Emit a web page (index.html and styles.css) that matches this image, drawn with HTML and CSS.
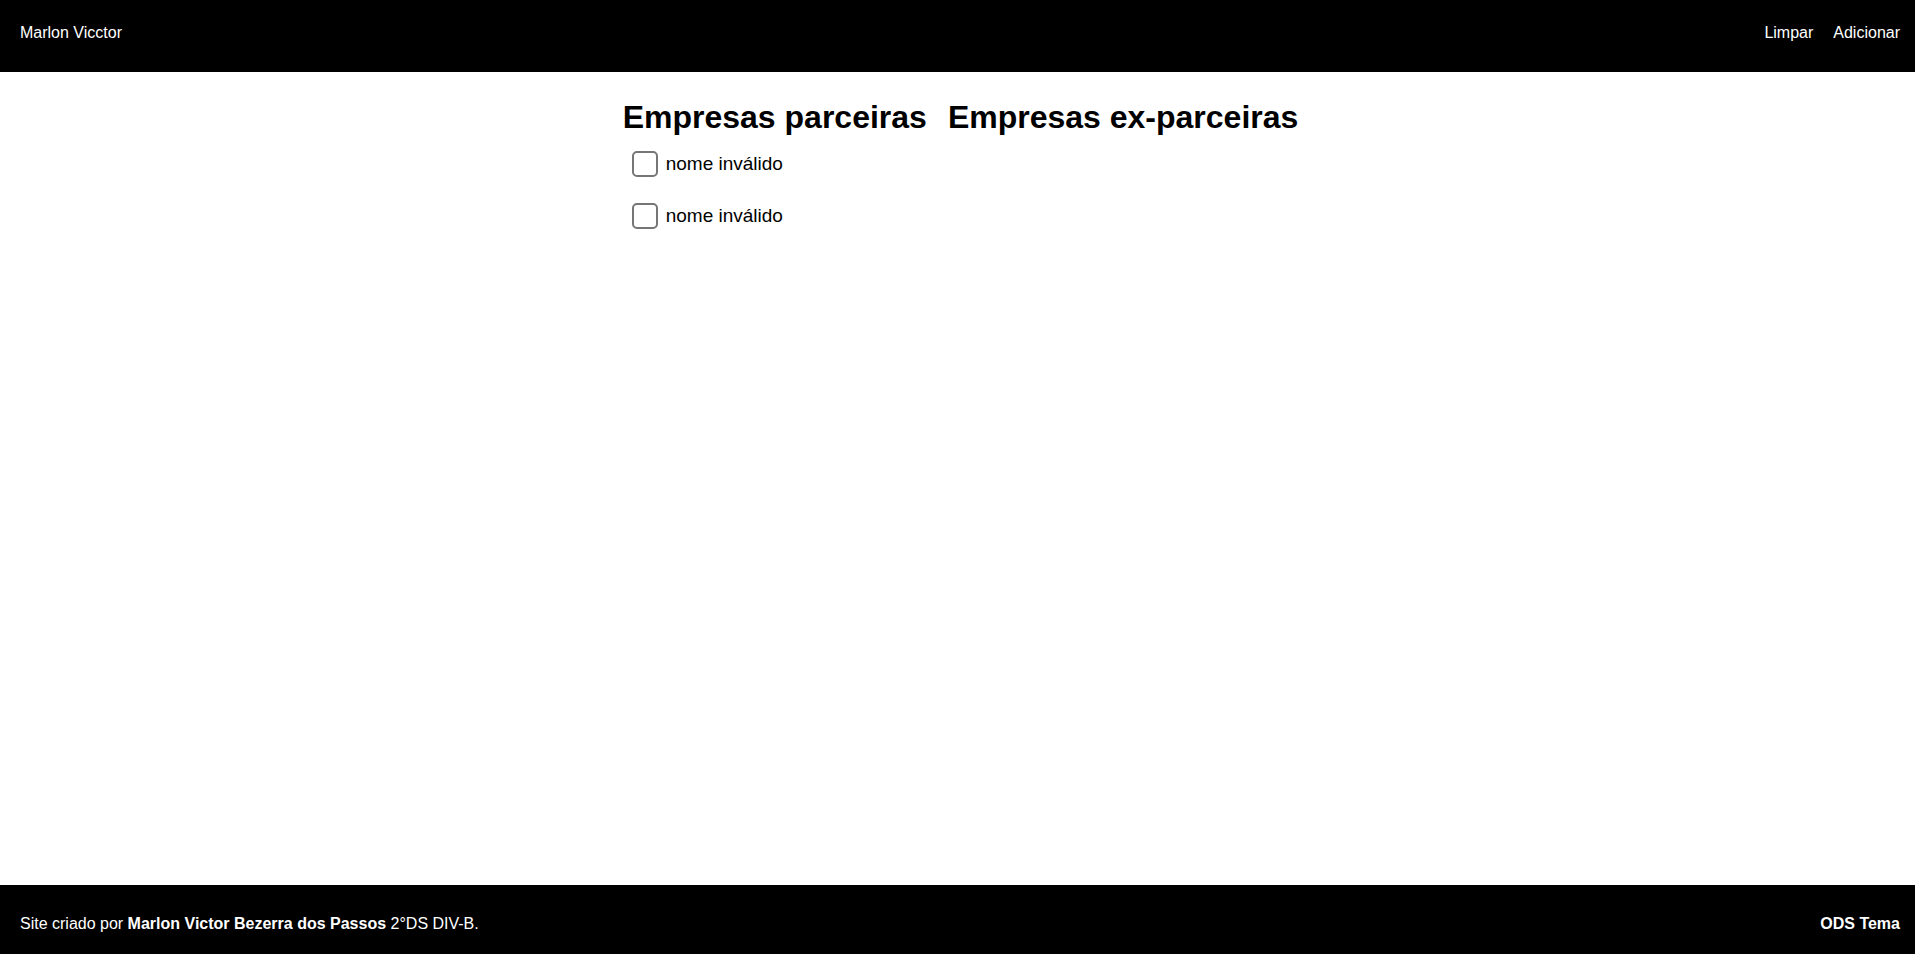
FILE: index.html
```html
<!DOCTYPE html>
<html lang="pt-BR">
<head>
<meta charset="utf-8">
<title>Empresas</title>
<link rel="stylesheet" href="styles.css">
</head>
<body>
<div class="page">
  <header class="topbar">
    <div class="brand">Marlon Vicctor</div>
    <nav class="nav">
      <a class="nav-link" href="#">Limpar</a>
      <a class="nav-link" href="#">Adicionar</a>
    </nav>
  </header>
  <main class="content">
    <section class="column">
      <h1 class="column-title">Empresas parceiras</h1>
      <ul class="list">
        <li class="item"><input class="check" type="checkbox"><span class="item-label">nome inválido</span></li>
        <li class="item"><input class="check" type="checkbox"><span class="item-label">nome inválido</span></li>
      </ul>
    </section>
    <section class="column">
      <h1 class="column-title">Empresas ex-parceiras</h1>
      <ul class="list"></ul>
    </section>
  </main>
  <footer class="footer">
    <div class="credits">Site criado por <strong>Marlon Victor Bezerra dos Passos</strong> 2°DS DIV-B.</div>
    <div class="theme"><strong>ODS Tema</strong></div>
  </footer>
</div>
</body>
</html>
```
FILE: styles.css
```css
* { box-sizing: border-box; }
html, body { margin: 0; padding: 0; }
body {
  font-family: "Liberation Sans", Arial, sans-serif;
  font-size: 16px;
  color: #000;
  background: #fff;
}
.page {
  display: flex;
  flex-direction: column;
  min-height: 100vh;
}
.topbar {
  background: #000;
  color: #fff;
  height: 72px;
  padding: 24px 15px 0 20px;
  display: flex;
  justify-content: space-between;
  align-items: flex-start;
  line-height: normal;
}
.nav { display: flex; gap: 20px; }
.nav-link { color: #fff; text-decoration: none; }
.content {
  flex: 1;
  display: flex;
  justify-content: center;
  align-items: flex-start;
  gap: 21px;
  padding-left: 6px;
}
.column { display: flex; flex-direction: column; }
.column-title {
  font-size: 32px;
  font-weight: bold;
  margin: 27px 0 0;
  line-height: normal;
  white-space: nowrap;
}
.list {
  list-style: none;
  margin: 2px 0 0;
  padding: 0;
}
.item {
  height: 52px;
  display: flex;
  align-items: center;
  padding-left: 9px;
}
.check {
  margin: 0;
  width: 13px;
  height: 13px;
  zoom: 2;
}
.item-label {
  font-size: 19px;
  margin-left: 8px;
}
.footer {
  background: #000;
  color: #fff;
  height: 69px;
  padding: 30px 15px 0 20px;
  display: flex;
  justify-content: space-between;
  align-items: flex-start;
}
```
